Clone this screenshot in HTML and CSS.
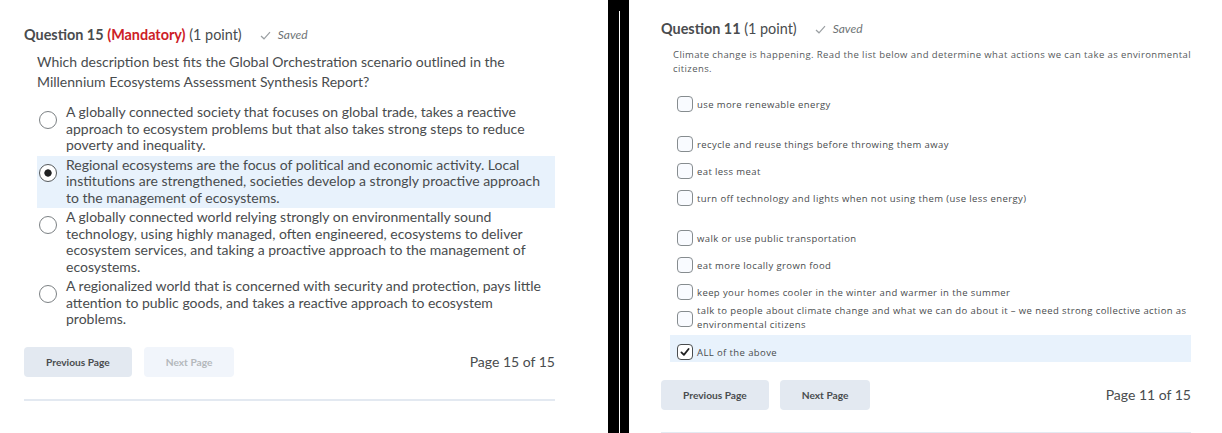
FILE: index.html
```html
<!DOCTYPE html>
<html lang="en">
<head>
<meta charset="utf-8">
<title>Quiz questions</title>
<link rel="stylesheet" href="styles.css">
</head>
<body>
<div class="screen">
  <section class="panel panel-left">
    <h2 class="q-title"><span class="q-label"><b>Question 15</b> <b class="req">(Mandatory)</b> (1 point)</span><span class="saved"><svg class="saved-icon" width="11" height="9" viewBox="0 0 11 9"><path d="M1 5 L4 7.8 L10 1.2" fill="none" stroke="#9a9fa2" stroke-width="1.2"/></svg>Saved</span></h2>
    <p class="q-text">Which description best fits the Global Orchestration scenario outlined in the Millennium Ecosystems Assessment Synthesis Report?</p>
    <div class="choices">
      <div class="choice"><span class="radio"></span><span class="choice-text">A globally connected society that focuses on global trade, takes a reactive approach to ecosystem problems but that also takes strong steps to reduce poverty and inequality.</span></div>
      <div class="choice choice-selected"><span class="radio radio-on"></span><span class="choice-text">Regional ecosystems are the focus of political and economic activity. Local institutions are strengthened, societies develop a strongly proactive approach to the management of ecosystems.</span></div>
      <div class="choice"><span class="radio"></span><span class="choice-text">A globally connected world relying strongly on environmentally sound technology, using highly managed, often engineered, ecosystems to deliver ecosystem services, and taking a proactive approach to the management of ecosystems.</span></div>
      <div class="choice"><span class="radio"></span><span class="choice-text">A regionalized world that is concerned with security and protection, pays little attention to public goods, and takes a reactive approach to ecosystem problems.</span></div>
    </div>
    <div class="nav nav-left">
      <div class="nav-buttons">
        <button class="btn">Previous Page</button>
        <button class="btn btn-disabled">Next Page</button>
      </div>
      <span class="page-count">Page 15 of 15</span>
    </div>
    <div class="rule rule-left"></div>
  </section>

  <div class="divider"><div class="divider-line"></div></div>

  <section class="panel panel-right">
    <h2 class="q-title"><span class="q-label"><b>Question 11</b> (1 point)</span><span class="saved"><svg class="saved-icon" width="11" height="9" viewBox="0 0 11 9"><path d="M1 5 L4 7.8 L10 1.2" fill="none" stroke="#9a9fa2" stroke-width="1.2"/></svg>Saved</span></h2>
    <p class="desc">Climate change is happening. Read the list below and determine what actions we can take as environmental citizens.</p>
    <div class="checklist">
      <div class="check-row spaced"><span class="box"></span><span class="check-label">use more renewable energy</span></div>
      <div class="check-row"><span class="box"></span><span class="check-label">recycle and reuse things before throwing them away</span></div>
      <div class="check-row"><span class="box"></span><span class="check-label">eat less meat</span></div>
      <div class="check-row spaced"><span class="box"></span><span class="check-label">turn off technology and lights when not using them (use less energy)</span></div>
      <div class="check-row"><span class="box"></span><span class="check-label">walk or use public transportation</span></div>
      <div class="check-row"><span class="box"></span><span class="check-label">eat more locally grown food</span></div>
      <div class="check-row"><span class="box"></span><span class="check-label">keep your homes cooler in the winter and warmer in the summer</span></div>
      <div class="check-row"><span class="box"></span><span class="check-label">talk to people about climate change and what we can do about it – we need strong collective action as environmental citizens</span></div>
      <div class="check-row check-selected"><span class="box box-on"><svg width="12" height="12" viewBox="0 0 12 12"><path d="M2.4 6.4 L4.9 8.9 L9.6 3" fill="none" stroke="#202122" stroke-width="1.8" stroke-linecap="round" stroke-linejoin="round"/></svg></span><span class="check-label">ALL of the above</span></div>
    </div>
    <div class="nav nav-right">
      <div class="nav-buttons">
        <button class="btn">Previous Page</button>
        <button class="btn">Next Page</button>
      </div>
      <span class="page-count">Page 11 of 15</span>
    </div>
    <div class="rule rule-right"></div>
  </section>
</div>
</body>
</html>
```

FILE: styles.css
```css
html, body {
  margin: 0;
  padding: 0;
  background: #ffffff;
}

.screen {
  display: flex;
  width: 1222px;
  height: 433px;
  overflow: hidden;
  font-family: Lato, "Open Sans", sans-serif;
  color: #494c4e;
}

.panel {
  box-sizing: border-box;
  display: flex;
  flex-direction: column;
}

.panel-left {
  width: 608px;
  padding: 25px 53px 0 24px;
}

.panel-right {
  width: 593px;
  padding: 19px 31px 0 32px;
}

.divider {
  width: 21px;
  flex: none;
  background: #000000;
  display: flex;
  box-sizing: border-box;
  padding: 11px 0 0 11px;
}

.divider-line {
  width: 1px;
  background: #ffffff;
}

.q-title {
  margin: 0;
  font-size: 14.4px;
  line-height: 20px;
  font-weight: 400;
  color: #494c4e;
  display: flex;
  align-items: center;
}

.q-title b {
  font-weight: 700;
}

.q-title .req {
  color: #cd2026;
}

.saved {
  display: inline-flex;
  align-items: center;
  margin-left: 18px;
  font-size: 12px;
  font-style: italic;
  color: #6e7376;
}

.saved-icon {
  margin-right: 7px;
}

.q-text {
  margin: 7px 0 0 13px;
  font-size: 14px;
  line-height: 20px;
}

.choices {
  margin: 11px 0 0 13px;
  display: flex;
  flex-direction: column;
}

.choice {
  display: flex;
  align-items: flex-start;
  padding: 1px 0 2px;
}

.choice-selected {
  background: #e8f2fc;
}

.radio {
  flex: none;
  box-sizing: border-box;
  width: 18px;
  height: 18px;
  margin: 7px 9px 0 2px;
  border: 1px solid #7c8184;
  border-radius: 50%;
  background: #ffffff;
}

.radio-on {
  border: 1.5px solid #565a5c;
  background: radial-gradient(circle, #202122 0 3.3px, #ffffff 4px);
}

.choice-text {
  font-size: 14px;
  line-height: 16.5px;
}

.nav {
  display: flex;
  align-items: center;
  justify-content: space-between;
}

.nav-left {
  margin-top: 17px;
}

.nav-right {
  margin-top: 18px;
}

.nav-buttons {
  display: flex;
  gap: 12px;
}

.nav-right .nav-buttons {
  gap: 11px;
}

.btn {
  box-sizing: border-box;
  height: 30px;
  padding: 0 22px;
  border: none;
  border-radius: 4px;
  background: #e3e9f1;
  color: #494c4e;
  font-family: Lato, sans-serif;
  font-size: 10.2px;
  font-weight: 700;
}

.btn-disabled {
  background: #f1f5fb;
  color: #b4b8bb;
}

.page-count {
  font-size: 14px;
  line-height: 20px;
  color: #494c4e;
}

.rule {
  height: 2px;
  background: #e3e9f1;
}

.rule-left {
  margin-top: 22px;
}

.rule-right {
  margin-top: 22px;
}

.desc {
  margin: 9px 0 0 12px;
  font-family: "Open Sans", sans-serif;
  font-size: 9.5px;
  letter-spacing: 0.4px;
  line-height: 14px;
  color: #565a5c;
}

.checklist {
  margin: 11px 0 0 9px;
  display: flex;
  flex-direction: column;
}

.check-row {
  box-sizing: border-box;
  min-height: 27px;
  padding: 2px 0 2px 7px;
  display: flex;
  align-items: flex-end;
}

.check-row.spaced {
  margin-bottom: 13px;
}

.check-selected {
  margin-top: 1px;
  background: #e8f2fc;
}

.box {
  flex: none;
  align-self: flex-start;
  box-sizing: border-box;
  width: 16px;
  height: 16px;
  margin: 7px 4px 0 0;
  border: 1px solid #868c8f;
  border-radius: 4px;
  background: #f9fbff;
  display: flex;
  align-items: center;
  justify-content: center;
}

.box-on {
  border: 1.5px solid #494c4e;
  background: #ffffff;
}

.check-label {
  font-family: "Open Sans", sans-serif;
  font-size: 9.5px;
  letter-spacing: 0.4px;
  line-height: 14px;
  color: #494c4e;
}
```
